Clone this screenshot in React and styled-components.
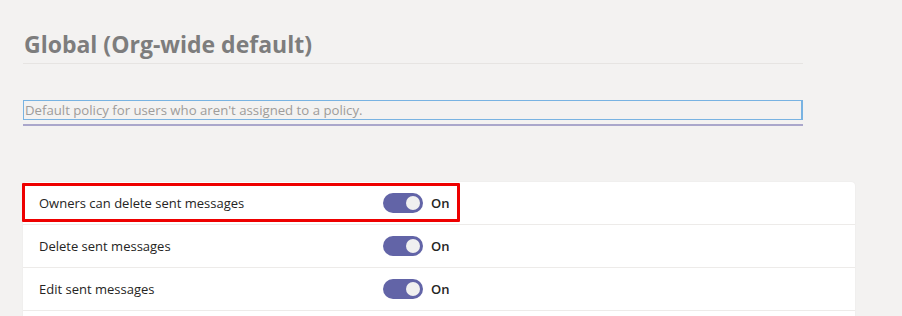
import styled, { createGlobalStyle } from "styled-components";

const GlobalStyle = createGlobalStyle`
  html, body {
    margin: 0;
    padding: 0;
    background: #f3f2f1;
    font-family: "Open Sans", "Noto Sans", sans-serif;
    overflow: hidden;
  }
`;

const settings = [
  { label: "Owners can delete sent messages", on: true, highlight: true },
  { label: "Delete sent messages", on: true },
  { label: "Edit sent messages", on: true },
];

const App = () => {
  return (
    <Page>
      <GlobalStyle />
      <Header>
        <Title>Global (Org-wide default)</Title>
      </Header>
      <Field>
        <Description>Default policy for users who aren't assigned to a policy.</Description>
      </Field>
      <Card>
        {settings.map((s) => (
          <Row key={s.label} $highlight={s.highlight}>
            <Label>{s.label}</Label>
            <ToggleWrap>
              <Toggle $on={s.on}>
                <Knob />
              </Toggle>
              <State>{s.on ? "On" : "Off"}</State>
            </ToggleWrap>
          </Row>
        ))}
      </Card>
    </Page>
  );
};

const Page = styled.div`
  padding: 0 0 0 23px;
  width: 832px;
`;

const Header = styled.div`
  width: 780px;
  padding-top: 26px;
  border-bottom: 1px solid #e6e4e2;
`;

const Title = styled.h1`
  margin: 0;
  font-size: 23px;
  line-height: 37px;
  font-weight: 700;
  color: #7d7d7d;
  padding-left: 1px;
`;

const Field = styled.div`
  width: 780px;
  margin-top: 36px;
  padding-bottom: 4px;
  border-bottom: 2px solid #aaa7cb;
`;

const Description = styled.div`
  box-sizing: border-box;
  height: 20px;
  border: 1px solid #78b3e2;
  border-right-width: 2px;
  font-size: 13.2px;
  line-height: 18px;
  color: #9e9c9a;
  padding-left: 1px;
`;

const Card = styled.div`
  margin-top: 56px;
  background: #ffffff;
  border-radius: 4px;
  box-shadow: 0 0 2px rgba(0, 0, 0, 0.06);
  width: 832px;
  padding-bottom: 30px;
`;

const Row = styled.div`
  position: relative;
  display: grid;
  grid-template-columns: 344px auto;
  align-items: center;
  height: 42px;
  padding-left: 16px;
  border-bottom: 1px solid #edebe9;

  ${({ $highlight }) =>
    $highlight &&
    `
    &::after {
      content: "";
      position: absolute;
      left: -1px;
      top: 1px;
      width: 432px;
      height: 33px;
      border: 3px solid #ee0000;
      border-radius: 1px;
      pointer-events: none;
    }
  `}
`;

const Label = styled.span`
  font-size: 13px;
  color: #252423;
`;

const ToggleWrap = styled.div`
  display: flex;
  align-items: center;
  gap: 8px;
`;

const Toggle = styled.div`
  box-sizing: border-box;
  width: 40px;
  height: 20px;
  border-radius: 10px;
  background: ${({ $on }) => ($on ? "#6264a7" : "#c8c6c4")};
  display: flex;
  align-items: center;
  justify-content: ${({ $on }) => ($on ? "flex-end" : "flex-start")};
  padding: 0 3px;
`;

const Knob = styled.div`
  width: 14px;
  height: 14px;
  border-radius: 50%;
  background: #f0f0f0;
`;

const State = styled.span`
  font-size: 13px;
  font-weight: 600;
  color: #252423;
`;

export default App;
